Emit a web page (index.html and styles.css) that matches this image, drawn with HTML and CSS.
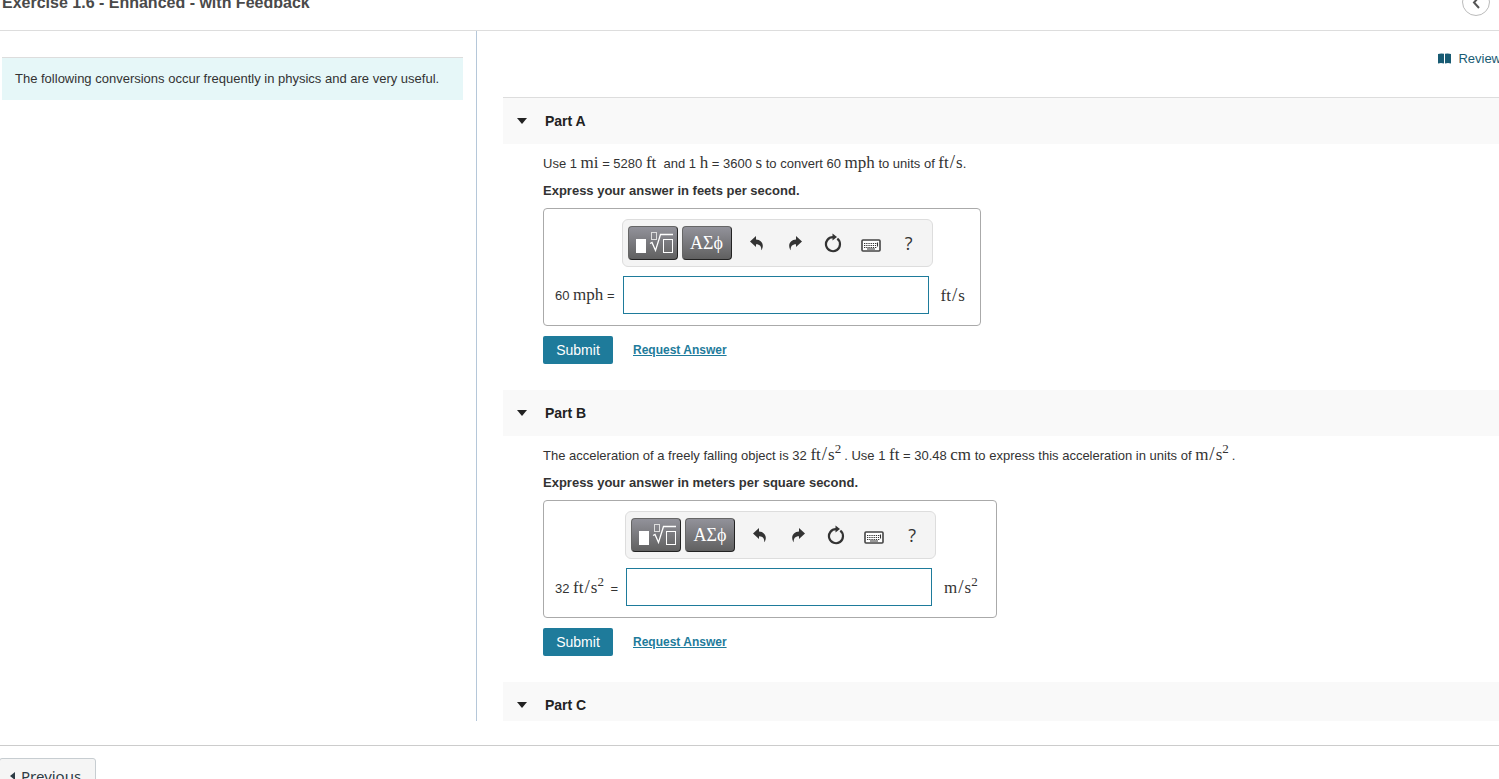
FILE: index.html
```html
<!DOCTYPE html>
<html lang="en">
<head>
    <meta charset="UTF-8">
    <meta name="viewport" content="width=device-width, initial-scale=1.0">
    <title>Exercise 1.6 - Enhanced - with Feedback</title>
    <link rel="stylesheet" href="styles.css">
</head>
<body>
    <!-- Shared toolbar icons -->
    <svg class="sprite" width="0" height="0" aria-hidden="true">
        <symbol id="icon-templates" viewBox="0 0 50 34">
            <rect x="8" y="13" width="10" height="14" fill="#fff"/>
            <rect x="23.5" y="6.5" width="5" height="7" fill="none" stroke="#ddd"/>
            <path d="M22 17.5l2-1 3.5 8L32.5 8.500H45" fill="none" stroke="#fff" stroke-width="1.3"/>
            <rect x="35.5" y="13.5" width="9" height="13" fill="none" stroke="#fff"/>
        </symbol>
        <symbol id="icon-undo" viewBox="0 0 16 16">
            <path d="M1 6.5L7 1v3.500c4 .2 7 3 6.800 6.500-.1 1.700-.6 3.200-1.500 4.300.2-3.800-1.300-6-5.300-6V12z" fill="#333"/>
        </symbol>
        <symbol id="icon-redo" viewBox="0 0 16 16">
            <path d="M15 6.5L9 1v3.500C5 4.700 2 7.500 2.200 11c.1 1.700.6 3.200 1.500 4.300C3.500 11.500 5 9.300 9 9.300V12z" fill="#333"/>
        </symbol>
        <symbol id="icon-reset" viewBox="0 0 18 20">
            <path d="M13.300 5.700A7 7 0 1 1 9 4.200" fill="none" stroke="#333" stroke-width="2.200"/>
            <path d="M8.500 0.500L13 4 8.500 7.500z" fill="#333"/>
        </symbol>
        <symbol id="icon-keyboard" viewBox="0 0 20 13">
            <rect x="1" y="1" width="18" height="11" rx="1" fill="#fff" stroke="#444" stroke-width="1.600"/>
            <path d="M3 4.500h14M3 6.500h12M3 8.500h13" stroke="#333" stroke-width="1.200" stroke-dasharray="1.300 .9"/>
            <path d="M6 10h8M16.500 3.500v4" stroke="#333" stroke-width="1.100"/>
        </symbol>
    </svg>

    <header class="page-header">
        <h1>Exercise 1.6 - Enhanced - with Feedback</h1>
        <button class="collapse" type="button" aria-label="Collapse">
            <svg width="10" height="14" viewBox="0 0 10 14"><path d="M8 2L3 7.500 8 13" fill="none" stroke="#555" stroke-width="2"/></svg>
        </button>
    </header>

    <main class="content">
        <aside class="intro">
            <p class="note">The following conversions occur frequently in physics and are very useful.</p>
        </aside>

        <div class="parts">
            <div class="tools">
                <a href="#" class="review">
                    <svg width="13" height="11" viewBox="0 0 13 11"><path d="M0 1Q3 0 6 .8V10.500Q3 9.500 0 10.500zM7 .8Q10 0 13 1V10.500Q10 9.500 7 10.500z" fill="#185b73"/></svg>
                    Review
                </a>
            </div>

            <!-- Part A -->
            <section class="part">
                <h2 class="part-title"><span class="caret"></span>Part A</h2>
                <div class="part-body">
                    <p>Use 1 <span class="math">mi</span> = 5280 <span class="math">ft</span>&nbsp; and 1 <span class="math">h</span> = 3600 <span class="math">s</span> to convert 60 <span class="math">mph</span> to units of <span class="math">ft<i>/</i>s</span>.</p>
                    <p class="hint">Express your answer in feets per second.</p>
                    <div class="answer">
                        <div class="toolbar">
                            <button class="key" type="button" aria-label="Templates"><svg width="50" height="34"><use href="#icon-templates"/></svg></button>
                            <button class="key symbols" type="button">ΑΣϕ</button>
                            <button class="tool" type="button" aria-label="Undo"><svg width="16" height="16"><use href="#icon-undo"/></svg></button>
                            <button class="tool" type="button" aria-label="Redo"><svg width="16" height="16"><use href="#icon-redo"/></svg></button>
                            <button class="tool" type="button" aria-label="Reset"><svg width="18" height="20"><use href="#icon-reset"/></svg></button>
                            <button class="tool keyboard" type="button" aria-label="Keyboard shortcuts"><svg width="20" height="13"><use href="#icon-keyboard"/></svg></button>
                            <button class="tool" type="button">?</button>
                        </div>
                        <label for="answer-a">60 <span class="math">mph</span> =</label>
                        <input type="text" id="answer-a" name="answer-a">
                        <span class="math unit">ft<i>/</i>s</span>
                    </div>
                    <div class="actions">
                        <button class="submit" type="button">Submit</button>
                        <a href="#">Request Answer</a>
                    </div>
                </div>
            </section>

            <!-- Part B -->
            <section class="part">
                <h2 class="part-title"><span class="caret"></span>Part B</h2>
                <div class="part-body">
                    <p>The acceleration of a freely falling object is 32 <span class="math">ft<i>/</i>s<sup>2</sup></span>. Use 1 <span class="math">ft</span> = 30.48 <span class="math">cm</span> to express this acceleration in units of <span class="math">m<i>/</i>s<sup>2</sup></span>.</p>
                    <p class="hint">Express your answer in meters per square second.</p>
                    <div class="answer">
                        <div class="toolbar">
                            <button class="key" type="button" aria-label="Templates"><svg width="50" height="34"><use href="#icon-templates"/></svg></button>
                            <button class="key symbols" type="button">ΑΣϕ</button>
                            <button class="tool" type="button" aria-label="Undo"><svg width="16" height="16"><use href="#icon-undo"/></svg></button>
                            <button class="tool" type="button" aria-label="Redo"><svg width="16" height="16"><use href="#icon-redo"/></svg></button>
                            <button class="tool" type="button" aria-label="Reset"><svg width="18" height="20"><use href="#icon-reset"/></svg></button>
                            <button class="tool keyboard" type="button" aria-label="Keyboard shortcuts"><svg width="20" height="13"><use href="#icon-keyboard"/></svg></button>
                            <button class="tool" type="button">?</button>
                        </div>
                        <label for="answer-b">32 <span class="math">ft<i>/</i>s<sup>2</sup></span> =</label>
                        <input type="text" id="answer-b" name="answer-b">
                        <span class="math unit">m<i>/</i>s<sup>2</sup></span>
                    </div>
                    <div class="actions">
                        <button class="submit" type="button">Submit</button>
                        <a href="#">Request Answer</a>
                    </div>
                </div>
            </section>

            <!-- Part C -->
            <section class="part">
                <h2 class="part-title"><span class="caret"></span>Part C</h2>
            </section>
        </div>
    </main>

    <footer class="page-footer">
        <button class="previous" type="button"><span class="arrow"></span>Previous</button>
    </footer>
</body>
</html>
```
FILE: styles.css
```css
* {
    box-sizing: border-box;
}
body {
    display: flex;
    flex-direction: column;
    height: 100vh;
    margin: 0;
    overflow: hidden;
    background-color: #fff;
    color: #333;
    font-family: "Liberation Sans", Arial, sans-serif;
    font-size: 13px;
}
h1, h2, p {
    margin: 0;
}
button {
    padding: 0;
    border: none;
    font-family: inherit;
    cursor: pointer;
}
.sprite {
    display: none;
}

/* Header */
.page-header {
    display: flex;
    flex: none;
    align-items: flex-end;
    justify-content: space-between;
    height: 31px;
    padding: 0 9px 14px 2px;
    border-bottom: 1px solid #ddd;
}
.page-header h1 {
    color: #4a4a4a;
    font-size: 16px;
    line-height: 26px;
}
.collapse {
    display: flex;
    flex: none;
    align-items: center;
    justify-content: center;
    width: 28px;
    height: 28px;
    border: 1px solid #bbb;
    border-radius: 50%;
    background-color: #fff;
}

/* Columns */
.content {
    display: grid;
    flex: 1;
    grid-template-columns: 477px 1fr;
    min-height: 0;
    margin-bottom: 24px;
    overflow: hidden;
}
.intro {
    padding: 26px 13px 0 2px;
    border-right: 1px solid #b5c7d9;
}
.note {
    padding: 11px 13px;
    border-top: 1px solid #ddd;
    background-color: #e6f7f8;
    line-height: 20px;
}
.parts {
    padding-left: 26px;
    overflow: hidden;
}
.tools {
    display: flex;
    justify-content: flex-end;
    height: 67px;
    padding-top: 17px;
    border-bottom: 1px solid #ddd;
}
.review {
    display: flex;
    align-items: center;
    gap: 7px;
    height: 20px;
    margin-right: -2px;
    color: #185b73;
    text-decoration: none;
}

/* Parts */
.part-title {
    display: flex;
    align-items: center;
    height: 46px;
    padding-left: 14px;
    background-color: #f9f9f9;
    color: #222;
    font-size: 14px;
}
.caret {
    margin-right: 18px;
    border: 5px solid transparent;
    border-top: 6px solid #222;
    border-bottom: 0;
}
.part-body {
    padding: 6px 0 26px 40px;
}
.part-body p {
    line-height: 27px;
}
.part-body .hint {
    font-weight: bold;
}
.math {
    font-family: "Liberation Serif", "Times New Roman", serif;
    font-size: 17px;
}
.math i {
    margin: 0 1px;
    font-size: 19px;
    font-style: normal;
}
.math sup {
    margin-right: 3px;
    font-size: 13px;
    line-height: 0;
}
.part-body p .math,
.part-body p i {
    line-height: 18px;
}

/* Answer box */
.answer {
    display: grid;
    grid-template-columns: auto 312px auto;
    align-items: center;
    gap: 9px 7px;
    width: fit-content;
    margin-top: 4px;
    padding: 10px 15px 11px 11px;
    border: 1px solid #aaa;
    border-radius: 4px;
}
.toolbar {
    display: flex;
    grid-column: 2;
    align-items: center;
    width: 311px;
    height: 48px;
    padding-left: 5px;
    border: 1px solid #ddd;
    border-radius: 6px;
    background-color: #f4f4f4;
}
.answer label {
    grid-column: 1;
    white-space: nowrap;
}
.answer input {
    width: 306px;
    height: 38px;
    margin-left: 1px;
    padding: 0 8px;
    border: 1px solid #1e7b9b;
    background-color: #fff;
    font-size: 16px;
}
.key {
    width: 50px;
    height: 34px;
    margin-right: 4px;
    border: 1px solid #222;
    border-top-color: #666;
    border-left-color: #666;
    border-radius: 4px;
    background: linear-gradient(#92929a, #606060);
    color: #fff;
    overflow: hidden;
}
.key svg {
    display: block;
    margin: -1px;
}
.symbols {
    margin-right: 6px;
    font-family: "Liberation Serif", serif;
    font-size: 18px;
}
.tool {
    display: flex;
    align-items: center;
    justify-content: center;
    width: 38px;
    height: 34px;
    background: none;
    color: #333;
    font-family: "Open Sans", sans-serif;
    font-size: 18px;
}
.keyboard {
    padding-top: 4px;
}

/* Actions */
.actions {
    display: flex;
    align-items: center;
    gap: 20px;
    margin-top: 10px;
}
.actions a {
    color: #1e7b9b;
    font-size: 12px;
    font-weight: bold;
}
.submit {
    width: 70px;
    height: 28px;
    border-radius: 2px;
    background-color: #1e7b9b;
    color: #fff;
    font-size: 14px;
}

/* Footer */
.page-footer {
    flex: none;
    height: 34px;
    padding-top: 12px;
    border-top: 1px solid #ccc;
}
.previous {
    display: flex;
    align-items: center;
    gap: 6px;
    height: 36px;
    margin-left: -1px;
    padding: 0 14px 0 10px;
    border: 1px solid #c7cdd1;
    border-radius: 3px;
    background-color: #f5f5f5;
    color: #2d3b45;
    font-family: "Noto Sans", sans-serif;
    font-size: 15px;
}
.arrow {
    border: 4px solid transparent;
    border-right: 5px solid #2d3b45;
    border-left: 0;
}
```
